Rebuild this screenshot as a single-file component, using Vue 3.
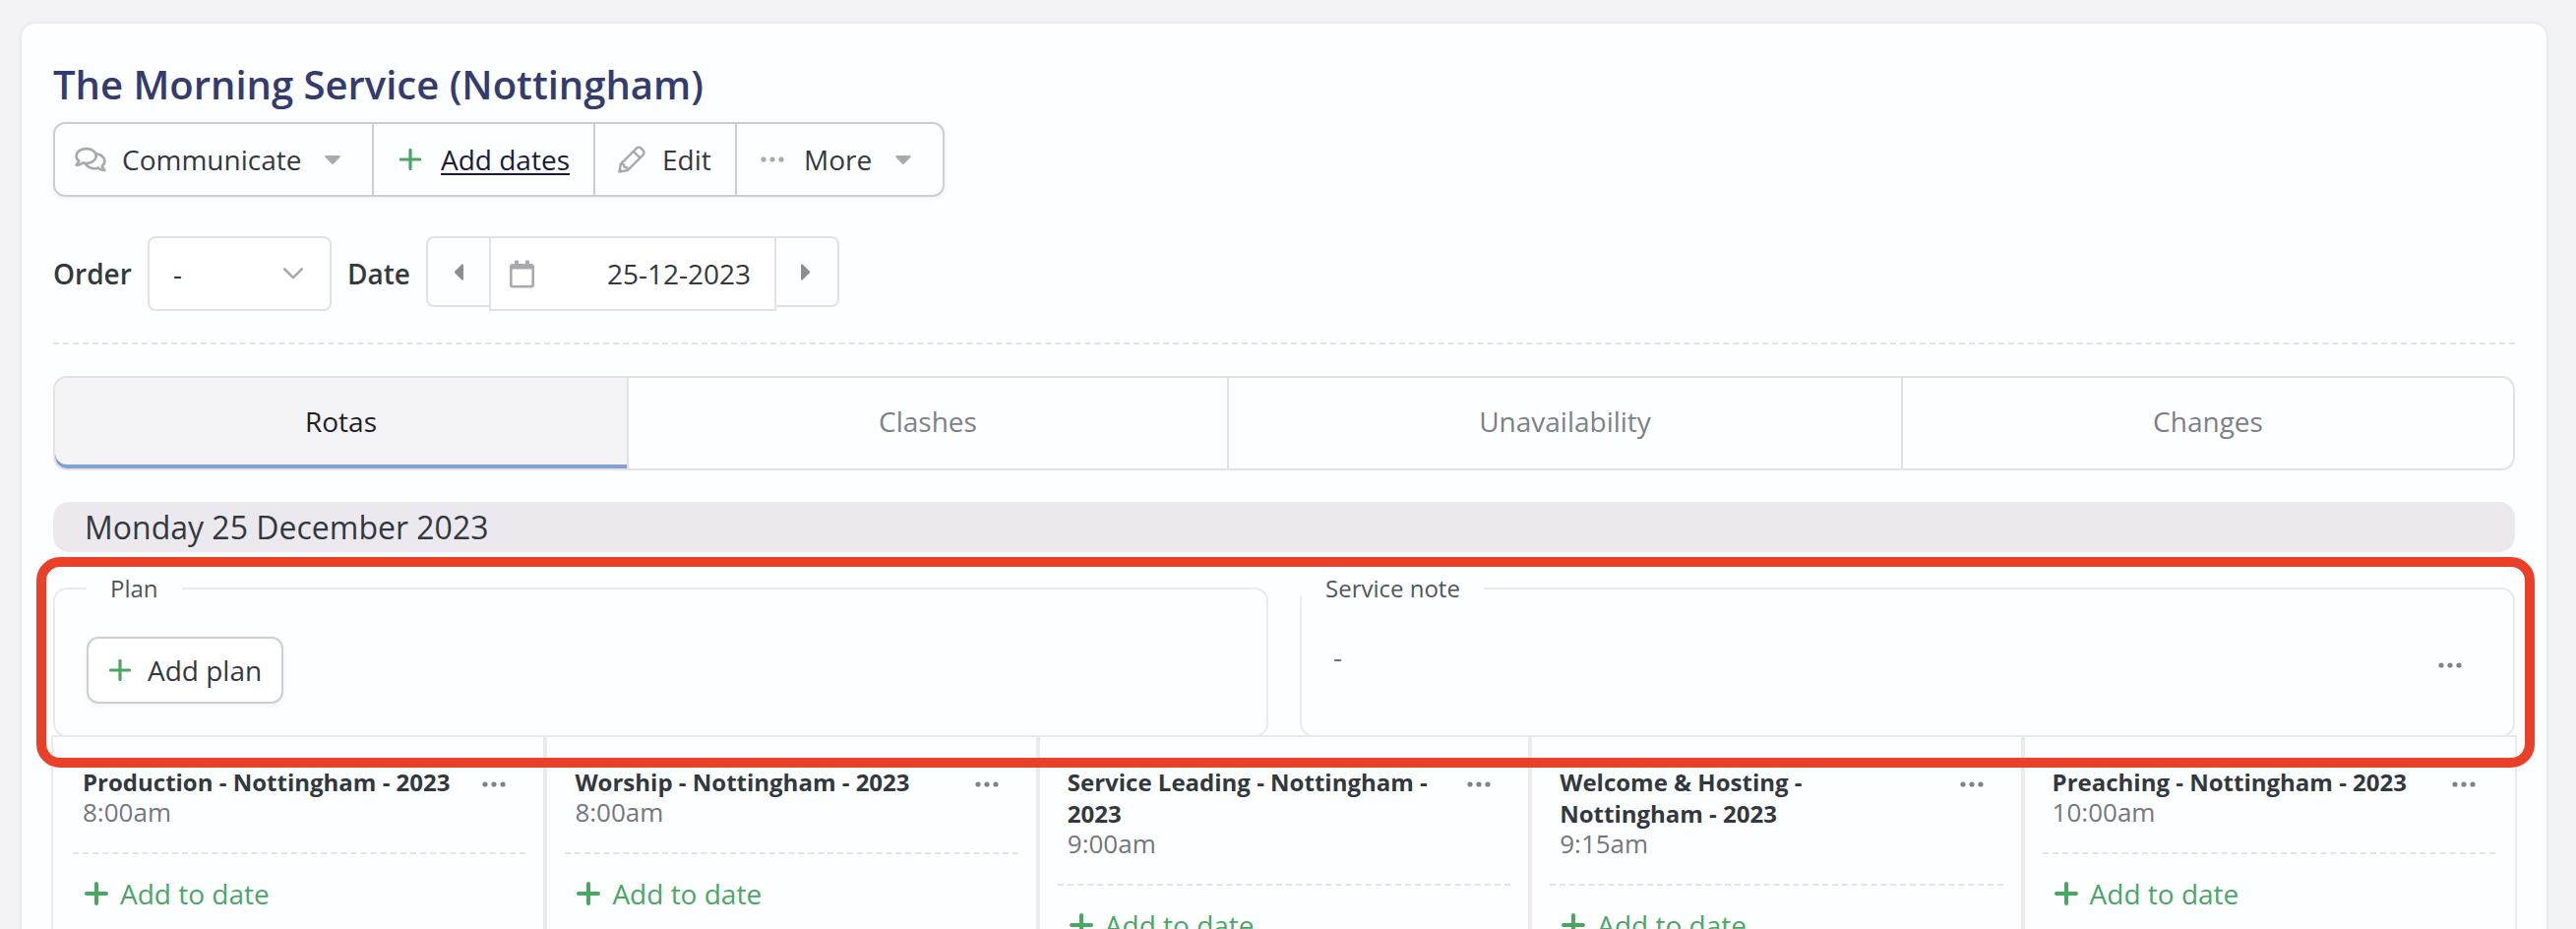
<template>
  <div class="page">
    <main class="card">
      <h1 class="title">The Morning Service (Nottingham)</h1>

      <!-- Actions -->
      <div class="btn-group">
        <button class="btn btn-communicate">
          <svg class="icon-comments" viewBox="0 0 576 512">
            <path d="M532 386.2c27.5-27.1 44-61.1 44-98.2 0-80-76.5-146.1-176.2-157.9C368.3 72.5 294.3 32 208 32 93.1 32 0 103.6 0 192c0 37 16.5 71 44 98.2-15.3 30.7-37.3 54.5-37.7 54.9-6.3 6.7-8.1 16.5-4.4 25 3.6 8.5 12 14 21.2 14 53.5 0 96.7-20.2 125.2-38.8 9.2 2.1 18.7 3.7 28.4 4.9C208.1 407.6 281.8 448 368 448c20.8 0 40.8-2.4 59.8-6.8C456.3 459.7 499.4 480 553 480c9.2 0 17.5-5.5 21.2-14 3.6-8.5 1.9-18.3-4.4-25-.4-.3-22.5-24.1-37.8-54.8zm-392.8-92.3L122.1 305c-14.1 9.1-28.5 16.3-43.1 21.4 2.7-4.7 5.4-9.7 8-14.8l15.5-31.1L77.7 256C64.2 242.6 48 220.7 48 192c0-60.7 73.3-112 160-112s160 51.3 160 112-73.3 112-160 112c-16.5 0-33-1.9-49-5.6l-19.8-4.5zM498.3 352l-24.7 24.4 15.5 31.1c2.6 5.1 5.3 10.1 8 14.8-14.6-5.1-29-12.3-43.1-21.4l-17.1-11.1-19.9 4.6c-16 3.7-32.5 5.6-49 5.6-54 0-102.2-20.1-131.3-49.7C338 339.5 416 272.9 416 192c0-3.4-.4-6.7-.7-10C479.7 196.5 528 238.8 528 288c0 28.7-16.2 50.6-29.7 64z" />
          </svg>
          <span>Communicate</span>
          <svg class="icon-caret" viewBox="0 0 16 10"><path d="M1 0h14a.8.8 0 0 1 .6 1.4L9 8.5a1.4 1.4 0 0 1-2 0L.4 1.4A.8.8 0 0 1 1 0z" /></svg>
        </button>
        <button class="btn btn-dates">
          <svg class="icon-plus" viewBox="0 0 22 22"><path d="M11 1.5v19M1.5 11h19" /></svg>
          <span>Add dates</span>
        </button>
        <button class="btn btn-edit">
          <svg class="icon-pencil" viewBox="0 0 28 28">
            <path d="M1.4 26.6l1.4-7.9L18.9 2.6a3.2 3.2 0 0 1 4.5 0l2.2 2.2a3.2 3.2 0 0 1 0 4.5L9.5 25.3z" />
            <path d="M15.8 5.8l6.6 6.6M2.9 18.6l3.1.6.6 2.6 2.6.7.4 2.7M1.6 24l2.6 2.4" />
          </svg>
          <span>Edit</span>
        </button>
        <button class="btn btn-more">
          <svg class="icon-dots" viewBox="0 0 24 6"><circle cx="3" cy="3" r="2.6" /><circle cx="12" cy="3" r="2.6" /><circle cx="21" cy="3" r="2.6" /></svg>
          <span>More</span>
          <svg class="icon-caret" viewBox="0 0 16 10"><path d="M1 0h14a.8.8 0 0 1 .6 1.4L9 8.5a1.4 1.4 0 0 1-2 0L.4 1.4A.8.8 0 0 1 1 0z" /></svg>
        </button>
      </div>

      <!-- Filters -->
      <div class="filters">
        <label class="label-order">Order</label>
        <div class="select">
          <span>{{ order }}</span>
          <svg class="icon-chevron" viewBox="0 0 20 12"><path d="M1.3 1.5L10 10.2l8.7-8.7" /></svg>
        </div>
        <label class="label-date">Date</label>
        <div class="date-picker">
          <button class="step step-prev">
            <svg class="icon-step" viewBox="0 0 9 17"><path d="M9 1.2v14.6a.9.9 0 0 1-1.5.6L.4 9.4a1.2 1.2 0 0 1 0-1.8l7.1-7A.9.9 0 0 1 9 1.2z" /></svg>
          </button>
          <div class="date-input">
            <svg class="icon-calendar" viewBox="0 0 25 29">
              <path fill-rule="evenodd" d="M5 1.4a1 1 0 0 1 1-1h2a1 1 0 0 1 1 1V4h7V1.4a1 1 0 0 1 1-1h2a1 1 0 0 1 1 1V4h2a3 3 0 0 1 3 3v18.5a3 3 0 0 1-3 3H3a3 3 0 0 1-3-3V7a3 3 0 0 1 3-3h2zM2.6 9.5v15.7c0 .4.3.7.7.7h18.4c.4 0 .7-.3.7-.7V9.5z" />
            </svg>
            <span>{{ date }}</span>
          </div>
          <button class="step step-next">
            <svg class="icon-step" viewBox="0 0 9 17"><path d="M0 1.2v14.6a.9.9 0 0 0 1.5.6l7.1-7a1.2 1.2 0 0 0 0-1.8L1.5.6A.9.9 0 0 0 0 1.2z" /></svg>
          </button>
        </div>
      </div>

      <div class="dashed"></div>

      <nav class="tabs">
        <a
          v-for="tab in tabs"
          :key="tab"
          class="tab"
          :class="{ active: tab === activeTab }"
          @click="activeTab = tab"
        >{{ tab }}</a>
      </nav>

      <!-- Selected day -->
      <section class="day">
        <h2 class="day-title">Monday 25 December 2023</h2>

        <div class="panels">
          <fieldset class="panel panel-plan">
            <legend>Plan</legend>
            <button class="btn-plan">
              <svg class="icon-plus" viewBox="0 0 22 22"><path d="M11 1.5v19M1.5 11h19" /></svg>
              <span>Add plan</span>
            </button>
          </fieldset>
          <fieldset class="panel panel-note">
            <legend>Service note</legend>
            <div class="note">
              <span>-</span>
              <svg class="icon-dots" viewBox="0 0 24 6"><circle cx="3" cy="3" r="2.6" /><circle cx="12" cy="3" r="2.6" /><circle cx="21" cy="3" r="2.6" /></svg>
            </div>
          </fieldset>
        </div>

        <div class="rotas">
          <article v-for="rota in rotas" :key="rota.name" class="rota">
            <div class="rota-head">
              <div class="rota-text">
                <h3>{{ rota.name }}</h3>
                <p>{{ rota.time }}</p>
              </div>
              <svg class="icon-dots" viewBox="0 0 24 6"><circle cx="3" cy="3" r="2.6" /><circle cx="12" cy="3" r="2.6" /><circle cx="21" cy="3" r="2.6" /></svg>
            </div>
            <a class="add-link">
              <svg class="icon-plus-bold" viewBox="0 0 24 24"><path d="M12 2v20M2 12h20" /></svg>
              <span>Add to date</span>
            </a>
          </article>
        </div>

        <div class="highlight"></div>
      </section>
    </main>
  </div>
</template>

<script setup>
import { ref } from 'vue';

const order = ref('-');
const date = ref('25-12-2023');
const tabs = ['Rotas', 'Clashes', 'Unavailability', 'Changes'];
const activeTab = ref('Rotas');

const rotas = [
  { name: 'Production - Nottingham - 2023', time: '8:00am' },
  { name: 'Worship - Nottingham - 2023', time: '8:00am' },
  { name: 'Service Leading - Nottingham - 2023', time: '9:00am' },
  { name: 'Welcome & Hosting - Nottingham - 2023', time: '9:15am' },
  { name: 'Preaching - Nottingham - 2023', time: '10:00am' },
];
</script>

<style>
body {
  margin: 0;
  background: #f3f3f5;
  overflow: hidden;
}
</style>

<style scoped>
.page {
  height: 944px;
  padding: 22px 28px 0 20px;
  box-sizing: border-box;
  overflow: hidden;
  background: #f3f3f5;
  font-family: 'Open Sans', 'Noto Sans', sans-serif;
  font-size: 28px;
  color: #32393e;
}
.page * {
  box-sizing: border-box;
}
.card {
  height: 1000px;
  padding: 35px 32px 0;
  background: #fdfeff;
  border: 2px solid #ebeaee;
  border-radius: 16px;
  box-shadow: 0 2px 6px rgba(0, 0, 0, 0.03);
}
.title {
  margin: 0 0 11px;
  font-size: 40px;
  font-weight: 600;
  line-height: 54px;
  color: #343b6e;
}
button {
  margin: 0;
  padding: 0;
  font: inherit;
  color: inherit;
  background: none;
  border: none;
}
svg {
  display: block;
  flex: none;
}

/* Button group */
.btn-group {
  display: flex;
  width: 906px;
  height: 76px;
  border: 2px solid #cdcdd2;
  border-radius: 12px;
  box-shadow: 0 2px 6px rgba(0, 0, 0, 0.06);
}
.btn {
  display: flex;
  align-items: center;
  white-space: nowrap;
}
.btn + .btn {
  border-left: 2px solid #cdcdd2;
}
.btn-communicate {
  width: 322px;
  padding-left: 20px;
}
.btn-communicate span {
  margin: 0 24px 0 16px;
}
.btn-dates {
  width: 225px;
  padding-left: 26px;
}
.btn-dates span {
  margin-left: 20px;
  color: #191a3a;
  text-decoration: underline;
  text-decoration-thickness: 2px;
  text-underline-offset: 3px;
}
.btn-edit {
  width: 144px;
  padding-left: 23px;
}
.btn-edit span {
  margin-left: 17px;
}
.btn-more {
  flex: 1;
  padding-left: 24px;
}
.btn-more span {
  margin: 0 24px 0 20px;
}
.icon-comments {
  width: 32px;
  height: 28px;
  fill: #a9aaaf;
}
.icon-caret {
  width: 16px;
  height: 10px;
  margin-top: 2px;
  fill: #a9aaaf;
}
.icon-plus {
  width: 22px;
  height: 22px;
  fill: none;
  stroke: #4ba664;
  stroke-width: 3.2;
  stroke-linecap: round;
}
.icon-pencil {
  width: 28px;
  height: 28px;
  fill: none;
  stroke: #a9aaaf;
  stroke-width: 2.4;
  stroke-linejoin: round;
}
.icon-dots {
  width: 24px;
  height: 6px;
  fill: #828288;
}
.btn-more .icon-dots {
  fill: #a9aaaf;
}

/* Filters */
.filters {
  display: flex;
  align-items: flex-start;
  height: 76px;
  margin-top: 40px;
}
.filters label {
  font-weight: 600;
  line-height: 76px;
}
.label-order {
  width: 96px;
}
.label-date {
  width: 80px;
}
.select {
  display: flex;
  align-items: center;
  justify-content: space-between;
  width: 187px;
  height: 76px;
  margin-right: 16px;
  padding: 0 27px 0 24px;
  background: #fff;
  border: 2px solid #e3e0e6;
  border-radius: 8px;
}
.icon-chevron {
  width: 20px;
  height: 12px;
  fill: none;
  stroke: #a9aaaf;
  stroke-width: 2.6;
  stroke-linecap: round;
  stroke-linejoin: round;
}
.date-picker {
  display: flex;
  align-items: flex-start;
}
.step {
  display: flex;
  align-items: center;
  height: 72px;
  border: 2px solid #e3e0e6;
}
.step-prev {
  width: 64px;
  padding-left: 27px;
  border-right: none;
  border-radius: 8px 0 0 8px;
}
.step-next {
  width: 64px;
  padding-left: 25px;
  border-left: none;
  border-radius: 0 8px 8px 0;
}
.icon-step {
  width: 9px;
  height: 17px;
  fill: #8c8c92;
}
.date-input {
  display: flex;
  align-items: center;
  justify-content: space-between;
  width: 292px;
  height: 76px;
  padding: 0 24px 0 19px;
  background: #fff;
  border: 2px solid #e3e0e6;
}
.icon-calendar {
  width: 25px;
  height: 29px;
  fill: #a9aaaf;
}
.dashed {
  margin: 32px 0;
  border-top: 2px dashed #e3e3e7;
}

/* Tabs */
.tabs {
  display: grid;
  grid-template-columns: 583fr 610fr 685fr 620fr;
  height: 96px;
  border: 2px solid #e3e0e6;
  border-radius: 14px;
  overflow: hidden;
}
.tab {
  border-right: 2px solid #e3e0e6;
  line-height: 88px;
  text-align: center;
  color: #7f8086;
}
.tab:last-child {
  border-right: none;
}
.tab.active {
  color: #1e2125;
  background: #f4f3f6;
  box-shadow: inset 0 -4px #82a1d0;
}
.tab.active:first-child {
  border-bottom-left-radius: 12px;
}

/* Day */
.day {
  position: relative;
  margin-top: 32px;
}
.day-title {
  height: 51px;
  margin: 0 0 21px;
  padding-left: 32px;
  font-size: 32px;
  font-weight: 400;
  line-height: 51px;
  background: #ece9ee;
  border-radius: 16px;
}
.panels {
  display: grid;
  grid-template-columns: 1fr 1fr;
  gap: 32px;
}
.panel {
  height: 167px;
  min-width: 0;
  margin: 0;
  border: 2px solid #ebe9ee;
  border-radius: 14px;
}
.panel legend {
  padding: 0 24px;
  font-size: 24px;
  line-height: 32px;
  color: #50565b;
}
.panel-plan {
  padding: 33px 32px 0;
}
.panel-note {
  padding: 33px 52px 0 0;
}
.btn-plan {
  display: flex;
  align-items: center;
  width: 200px;
  height: 68px;
  padding-left: 21px;
  background: #fff;
  border: 2px solid #cdcdd2;
  border-radius: 12px;
  box-shadow: 0 2px 6px rgba(0, 0, 0, 0.05);
}
.btn-plan span {
  margin-left: 17px;
}
.note {
  display: flex;
  align-items: center;
  justify-content: space-between;
  height: 57px;
  padding-left: 32px;
  line-height: 42px;
  color: #6f7076;
}
.note span {
  margin-top: -18px;
}

/* Rota columns */
.rotas {
  display: grid;
  grid-template-columns: repeat(5, 1fr);
  height: 300px;
  margin: -2px -2px 0;
  border: 2px solid #ebe9ee;
}
.rota {
  padding: 30px 18px 0;
  border: 2px solid #ebe9ee;
  border-width: 0 2px;
}
.rota:first-child {
  border-left-color: transparent;
}
.rota:last-child {
  border-right-color: transparent;
}
.rota-head {
  display: flex;
  justify-content: space-between;
  align-items: flex-start;
  padding: 0 20px 27px 10px;
}
.rota-text {
  width: 385px;
}
.rota h3 {
  margin: 0;
  font-size: 24px;
  font-weight: 700;
  line-height: 32px;
}
.rota p {
  margin: 0;
  font-size: 26px;
  line-height: 28px;
  color: #75767c;
}
.rota-head .icon-dots {
  margin-top: 15px;
}
.add-link {
  display: flex;
  align-items: center;
  height: 62px;
  padding: 20px 0 0 12px;
  border-top: 2px dashed #e5e3e8;
  color: #4ba664;
}
.add-link span {
  margin-left: 12px;
}
.icon-plus-bold {
  width: 24px;
  height: 24px;
  fill: none;
  stroke: #4ba664;
  stroke-width: 4;
  stroke-linecap: round;
}

/* Red outline around the plan and note panels */
.highlight {
  position: absolute;
  top: 56px;
  left: -17px;
  right: -20px;
  height: 214px;
  border: 10px solid #ea4027;
  border-radius: 24px;
  pointer-events: none;
}
</style>
